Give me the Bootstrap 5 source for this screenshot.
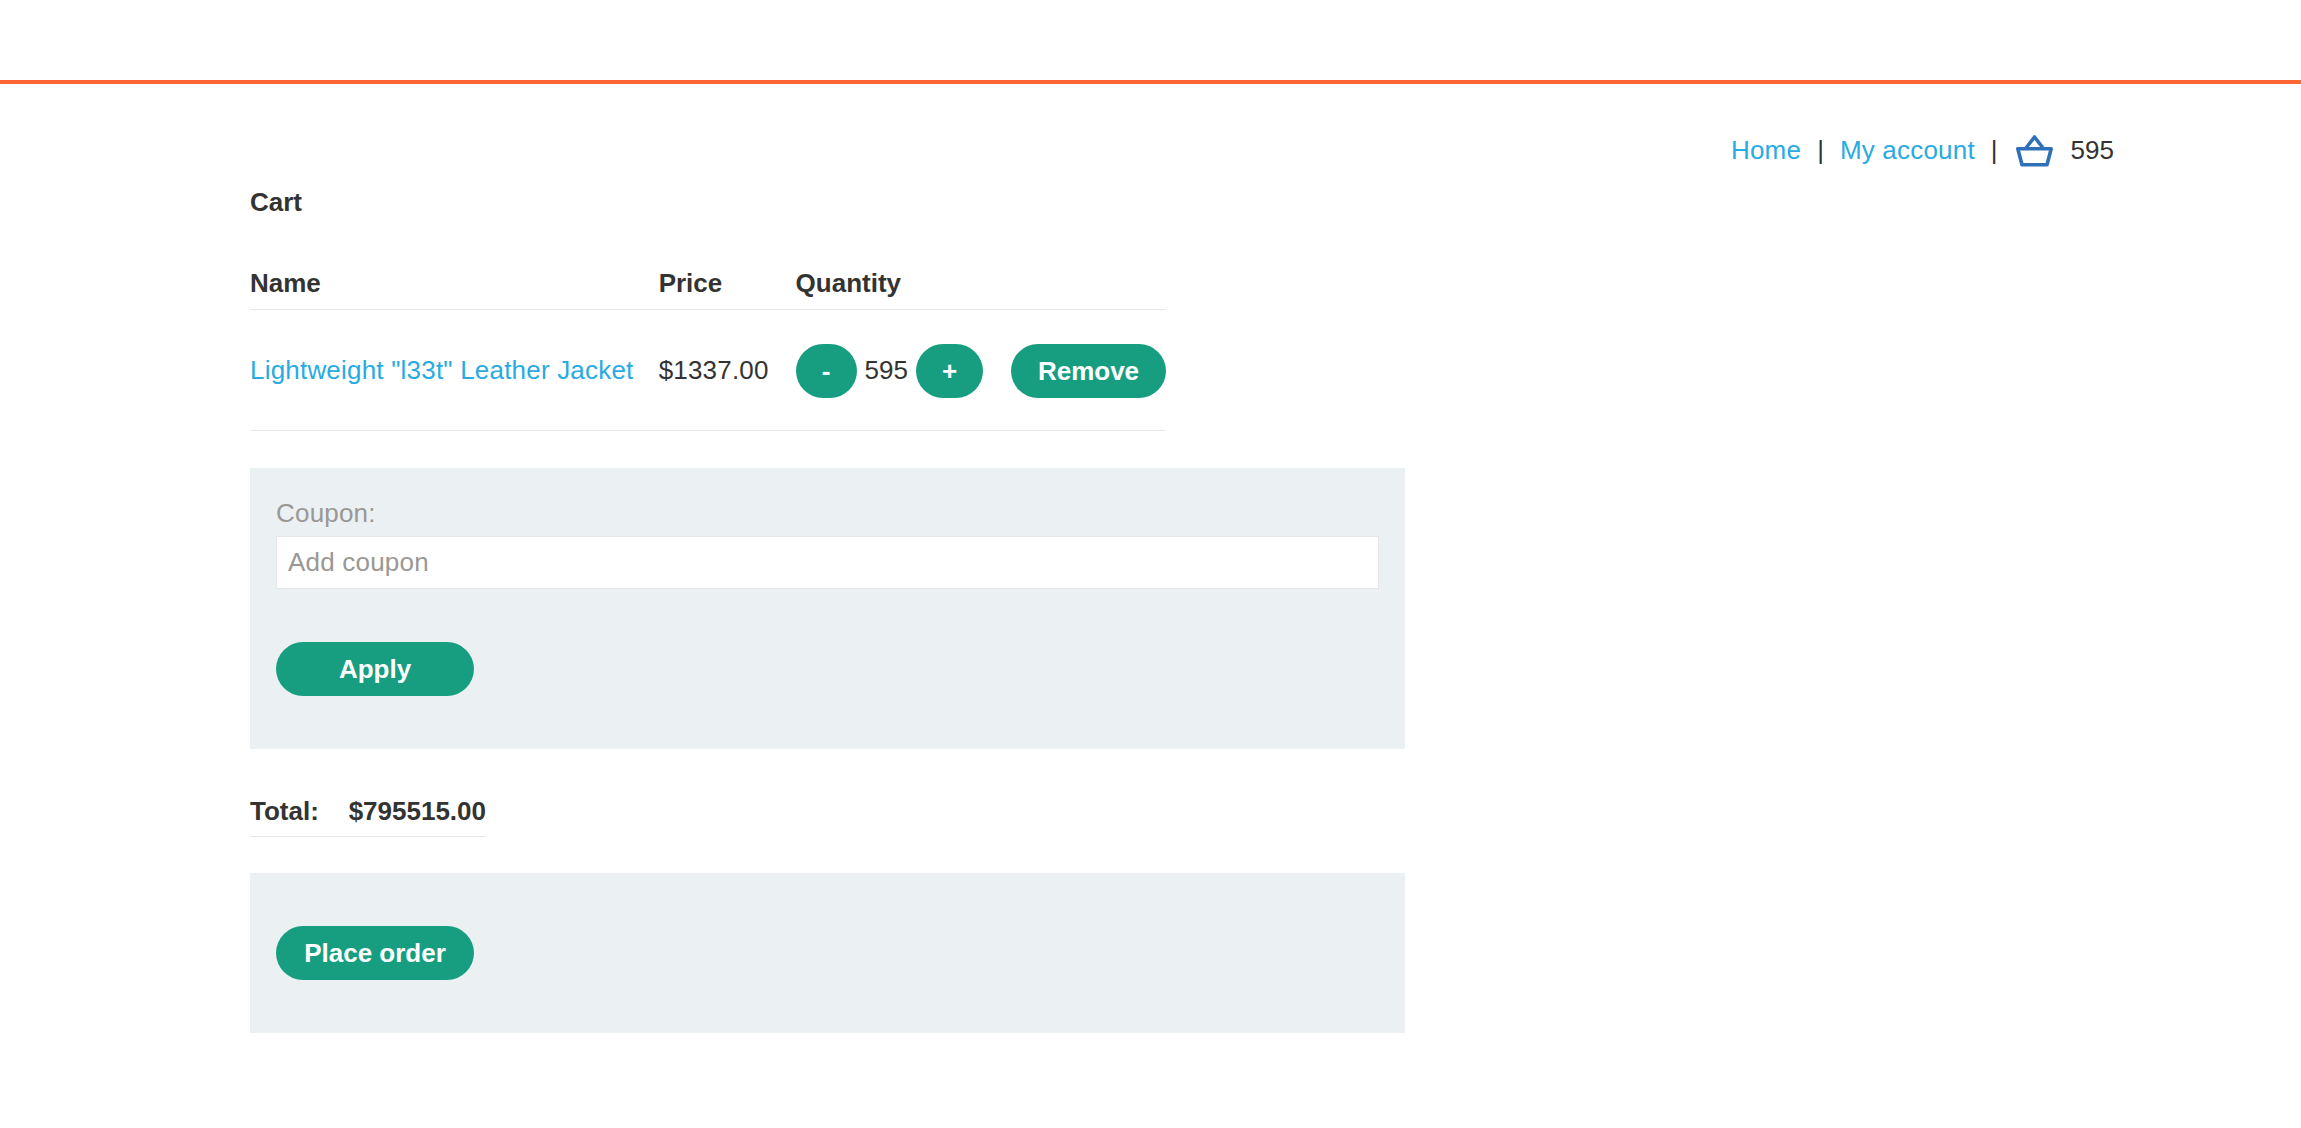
<!DOCTYPE html>
<html lang="en">

<head>
    <meta charset="UTF-8">
    <meta name="viewport" content="width=device-width, initial-scale=1.0">
    <title>Cart</title>
    <link href="https://cdn.jsdelivr.net/npm/bootstrap@5.3.3/dist/css/bootstrap.min.css" rel="stylesheet">
    <script src="https://cdn.jsdelivr.net/npm/bootstrap@5.3.3/dist/js/bootstrap.bundle.min.js"></script>

    <style>
        body {
            font-family: "Liberation Sans", Arial, sans-serif;
            font-size: 26px;
            line-height: 1.4;
            color: #333332;
            background: #fff;
        }

        a {
            color: #29abe2;
            text-decoration: none;
        }

        .wide-text {
            letter-spacing: .2px;
        }

        .top-bar {
            height: 84px;
            border-bottom: 4px solid #ff6633;
        }

        .page-wrap {
            padding: 0 187px 0 250px;
        }

        .top-links {
            height: 100px;
            padding-top: 48px;
            line-height: 36px;
        }

        .top-links .sep {
            color: #333332;
        }

        .basket-icon {
            margin: 3px 0 0 2px;
        }

        .basket-count {
            margin-left: 18px;
        }

        .cart-title {
            font-size: 26px;
            font-weight: 700;
            line-height: 36px;
            margin: 0;
            height: 81px;
        }

        .cart-table {
            width: 916px;
            margin: 0;
            border-collapse: collapse;
        }

        .cart-table th {
            font-weight: 700;
            height: 44px;
            padding: 0;
            vertical-align: top;
            line-height: 36px;
            border-bottom: 1px solid #e6e6e6;
        }

        .cart-table td {
            height: 121px;
            padding: 2px 0 0;
            vertical-align: middle;
            border-bottom: 1px solid #e6e6e6;
        }

        .col-name {
            width: 409px;
        }

        .col-price {
            width: 137px;
        }

        .btn-lab {
            background: #179e80;
            color: #fff;
            border: 0;
            font-weight: 700;
            font-size: 26px;
            line-height: 1;
            height: 54px;
            padding: 0;
            border-radius: 27px;
        }

        .btn-lab:hover,
        .btn-lab:active {
            background: #179e80 !important;
            color: #fff !important;
        }

        .btn-minus {
            width: 61px;
        }

        .btn-plus {
            width: 67px;
        }

        .btn-remove {
            width: 155px;
            margin-left: 28px;
        }

        .btn-wide {
            width: 198px;
        }

        .grey-box {
            width: 1155px;
            background: #ebf0f2;
            padding: 0 26px;
        }

        .coupon-box {
            height: 281px;
            margin-top: 37px;
            padding-top: 27px;
        }

        .coupon-label {
            display: block;
            color: #999895;
            line-height: 36px;
            margin: 0 0 5px;
        }

        .coupon-input {
            display: block;
            width: 100%;
            height: 53px;
            border: 1px solid #e6e6e6;
            border-radius: 0;
            padding: 0 11px;
            font-size: 26px;
            color: #333332;
            background: #fff;
            box-shadow: none;
        }

        .coupon-input::placeholder {
            color: #999895;
            opacity: 1;
        }

        .coupon-apply {
            margin-top: 53px;
        }

        .total-row {
            width: 236px;
            height: 88px;
            padding-top: 44px;
            line-height: 36px;
            font-weight: 700;
            border-bottom: 1px solid #e6e6e6;
        }

        .order-box {
            height: 160px;
            margin-top: 36px;
            padding-top: 53px;
        }
    </style>

</head>

<body>

    <div class="top-bar"></div>

    <div class="page-wrap">

        <div class="top-links d-flex justify-content-end align-items-start">
            <a href="#" class="wide-text">Home</a>
            <span class="sep ms-3 me-3">|</span>
            <a href="#" class="wide-text">My account</a>
            <span class="sep ms-3 me-3">|</span>
            <svg class="basket-icon" width="37" height="32" viewBox="0 0 37 32" fill="none" stroke="#2f70b8" stroke-width="3.6" stroke-linejoin="round" stroke-linecap="round">
                <path d="M1.800 13.800h33.400l-4.200 15.900h-25z" />
                <path d="M10 13l8.500-11 8.500 11" />
            </svg>
            <span class="basket-count">595</span>
        </div>

        <h1 class="cart-title">Cart</h1>

        <table class="cart-table">
            <thead>
                <tr>
                    <th class="col-name">Name</th>
                    <th class="col-price">Price</th>
                    <th>Quantity</th>
                </tr>
            </thead>
            <tbody>
                <tr>
                    <td><a href="#" class="wide-text">Lightweight "l33t" Leather Jacket</a></td>
                    <td class="wide-text">$1337.00</td>
                    <td>
                        <div class="d-flex align-items-center">
                            <button class="btn btn-lab btn-minus">-</button>
                            <span class="mx-2">595</span>
                            <button class="btn btn-lab btn-plus">+</button>
                            <button class="btn btn-lab btn-remove">Remove</button>
                        </div>
                    </td>
                </tr>
            </tbody>
        </table>

        <form class="grey-box coupon-box">
            <label class="coupon-label wide-text" for="coupon">Coupon:</label>
            <input id="coupon" class="coupon-input wide-text" type="text" placeholder="Add coupon">
            <button type="button" class="btn btn-lab btn-wide coupon-apply">Apply</button>
        </form>

        <div class="total-row d-flex justify-content-between">
            <span>Total:</span>
            <span>$795515.00</span>
        </div>

        <div class="grey-box order-box">
            <button type="button" class="btn btn-lab btn-wide">Place order</button>
        </div>

    </div>

</body>

</html>
